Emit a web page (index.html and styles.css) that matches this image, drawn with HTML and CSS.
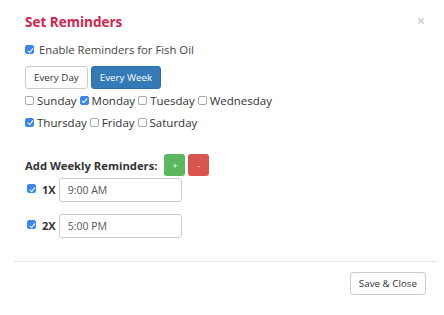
FILE: index.html
```html
<!DOCTYPE html>
<html lang="en">
<head>
    <meta charset="UTF-8">
    <meta name="viewport" content="width=device-width, initial-scale=1.0">
    <title>Set Reminders</title>
    <link rel="stylesheet" href="styles.css">
</head>
<body>
    <div class="modal">
        <div class="modal-header">
            <h4 class="title">Set Reminders</h4>
            <span class="close">&times;</span>
        </div>

        <div class="modal-body">
            <label class="check enable">
                <input type="checkbox" checked>
                <span>Enable Reminders for Fish Oil</span>
            </label>

            <div class="btn-group">
                <button class="btn">Every Day</button>
                <button class="btn btn-primary">Every Week</button>
            </div>

            <div class="days">
                <label class="check"><input type="checkbox"><span>Sunday</span></label>
                <label class="check"><input type="checkbox" checked><span>Monday</span></label>
                <label class="check"><input type="checkbox"><span>Tuesday</span></label>
                <label class="check"><input type="checkbox"><span>Wednesday</span></label>
            </div>
            <div class="days">
                <label class="check"><input type="checkbox" checked><span>Thursday</span></label>
                <label class="check"><input type="checkbox"><span>Friday</span></label>
                <label class="check"><input type="checkbox"><span>Saturday</span></label>
            </div>

            <div class="add-row">
                <span class="add-label">Add Weekly Reminders:</span>
                <button class="btn-small btn-success">+</button>
                <button class="btn-small btn-danger">-</button>
            </div>

            <div class="reminder">
                <input type="checkbox" checked>
                <span class="times">1X</span>
                <input type="text" class="time-input" value="9:00 AM">
            </div>
            <div class="reminder second">
                <input type="checkbox" checked>
                <span class="times">2X</span>
                <input type="text" class="time-input" value="5:00 PM">
            </div>
        </div>

        <div class="modal-footer">
            <button class="btn">Save &amp; Close</button>
        </div>
    </div>
</body>
</html>
```

FILE: styles.css
```css
body {
    font-family: 'Open Sans', 'Liberation Sans', sans-serif;
    font-size: 11.5px;
    color: #333;
    margin: 0;
    padding: 0;
    background: #fff;
}

.modal {
    width: 423px;
    height: 302px;
    margin: 3px 0 0 14px;
    border-radius: 6px;
    display: flex;
    flex-direction: column;
}

.modal-header {
    display: flex;
    justify-content: space-between;
    align-items: flex-start;
    padding: 10px 11px 0 11px;
}

.title {
    margin: 0;
    font-size: 13.5px;
    line-height: 18px;
    font-weight: bold;
    color: #d3234a;
}

.close {
    font-size: 14px;
    line-height: 14px;
    font-weight: bold;
    color: #cfcfcf;
    margin-top: 1px;
    margin-right: 1px;
}

.modal-body {
    flex: 1;
    padding: 0 11px;
}

/* чекбоксы */
input[type="checkbox"] {
    appearance: none;
    -webkit-appearance: none;
    width: 9px;
    height: 9px;
    margin: 0;
    border: 1px solid #a9a9a9;
    border-radius: 2px;
    background: #fff;
    position: relative;
    flex-shrink: 0;
}

input[type="checkbox"]:checked {
    background: #3b87f0;
    border-color: #3b87f0;
}

input[type="checkbox"]:checked::after {
    content: '';
    position: absolute;
    left: 2.5px;
    top: 0.5px;
    width: 2px;
    height: 5px;
    border: solid #fff;
    border-width: 0 1.3px 1.3px 0;
    transform: rotate(40deg);
}

.check {
    display: inline-flex;
    align-items: center;
    gap: 3px;
    margin-right: 3px;
}

.enable {
    margin-top: 10px;
    line-height: 17px;
    font-size: 11.3px;
    gap: 5px;
    color: #444;
}

.btn-group {
    display: flex;
    gap: 3px;
    margin-top: 8px;
}

.btn {
    font-family: inherit;
    font-size: 9.8px;
    color: #333;
    background: #fff;
    border: 1px solid #ccc;
    border-radius: 3px;
    height: 23px;
    padding: 0 8px;
    line-height: 21px;
}

.btn-primary {
    color: #fff;
    background: #337ab7;
    border-color: #2e6da4;
}

.days {
    display: flex;
    align-items: center;
    height: 22px;
}

.days .check {
    margin-right: 3px;
}

.add-row {
    display: flex;
    align-items: center;
    margin-top: 21px;
}

.add-label {
    font-weight: bold;
    font-size: 11.25px;
    margin-right: 7px;
    color: #333;
}

.btn-small {
    width: 21px;
    height: 22px;
    border: none;
    border-radius: 3px;
    color: #fff;
    font-family: inherit;
    font-size: 9px;
    padding: 0;
    margin-right: 3px;
}

.btn-success {
    background: #5cb85c;
}

.btn-danger {
    background: #d9534f;
}

.reminder {
    display: flex;
    align-items: flex-start;
    margin-top: 2px;
    padding-left: 2px;
}

.reminder.second {
    margin-top: 12px;
}

.reminder input[type="checkbox"] {
    margin-top: 6px;
}

.times {
    font-weight: bold;
    font-size: 11px;
    line-height: 24px;
    margin-left: 6px;
    margin-right: 3px;
}

.time-input {
    width: 123px;
    height: 24px;
    box-sizing: border-box;
    border: 1px solid #ccc;
    border-radius: 3px;
    padding: 0 8px;
    font-family: inherit;
    font-size: 10.5px;
    color: #555;
}

.modal-footer {
    border-top: 1px solid #e5e5e5;
    padding: 10px 11px 10px 11px;
    display: flex;
    justify-content: flex-end;
}
```
